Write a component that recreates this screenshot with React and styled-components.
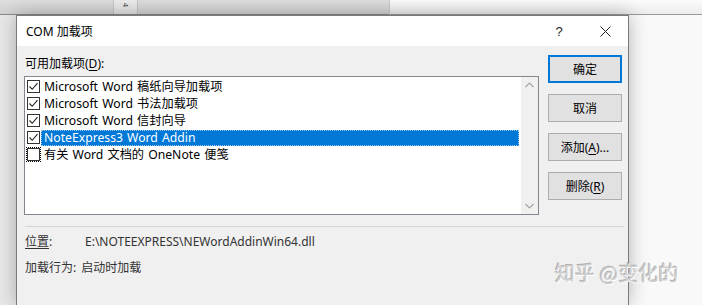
import React from 'react';
import styled, { createGlobalStyle } from 'styled-components';

const GlobalStyle = createGlobalStyle`
  html, body {
    margin: 0;
    padding: 0;
    width: 702px;
    height: 305px;
    overflow: hidden;
    background: #f9f9f9;
  }
  body {
    font-family: "Noto Sans", "Noto Sans CJK SC", sans-serif;
    font-size: 12px;
    color: #000;
  }
`;

const Page = styled.div`
  position: relative;
  width: 702px;
  height: 305px;
  display: flex;
  flex-direction: column;
  overflow: hidden;
`;

const TopStrip = styled.div`
  height: 15px;
  display: flex;
  flex-shrink: 0;
`;

const DocArea = styled.div`
  width: 389px;
  display: flex;
  padding-left: 113px;
  box-sizing: border-box;
  background: linear-gradient(#dedede, #d2d2d2);
  border-bottom: 1px solid #8a8a8a;
`;

const Ruler = styled.div`
  width: 23px;
  display: flex;
  justify-content: center;
  align-items: flex-start;
  background: linear-gradient(#ececec, #e2e2e2);
  border-left: 1px solid #c6c6c6;
  border-right: 1px solid #c6c6c6;
  font-family: "Liberation Sans", sans-serif;
  font-size: 8px;
  line-height: 8px;
  color: #444;
  span {
    transform: rotate(90deg);
    margin-top: 1px;
  }
`;

const PaneArea = styled.div`
  flex: 1;
  background: linear-gradient(#fbfbfb, #ececec);
  border-bottom: 1px solid #9a9a9a;
  border-left: 1px solid #c9c9c9;
`;

const Desk = styled.div`
  flex: 1;
  display: flex;
`;

const Gutter = styled.div`
  width: 16px;
  flex-shrink: 0;
  background: #e8e8e8;
`;

const Dialog = styled.div`
  position: relative;
  z-index: 1;
  width: 613px;
  flex-shrink: 0;
  box-sizing: border-box;
  border: 1px solid #7a7a7a;
  border-bottom: none;
  background: #f0f0f0;
  box-shadow: 0 0 18px rgba(0, 0, 0, 0.28);
  display: flex;
  flex-direction: column;
`;

const TitleBar = styled.div`
  height: 30px;
  background: #fff;
  display: flex;
  align-items: center;
  padding-left: 9px;
`;

const Title = styled.div`
  flex: 1;
  font-size: 12px;
  color: #000;
`;

const TitleButton = styled.div`
  width: 46px;
  height: 30px;
  display: flex;
  align-items: center;
  justify-content: center;
  font-family: "Liberation Sans", sans-serif;
  font-size: 13px;
  color: #222;
`;

const Body = styled.div`
  padding: 9px 6px 0 7px;
`;

const Main = styled.div`
  display: flex;
  gap: 9px;
`;

const LeftCol = styled.div`
  width: 515px;
  display: flex;
  flex-direction: column;
`;

const Label = styled.div`
  height: 18px;
  line-height: 18px;
  padding-left: 1px;
  margin-bottom: 3px;
`;

const Key = styled.span`
  text-decoration: underline;
  text-underline-offset: 2px;
`;

const ListBox = styled.div`
  height: 139px;
  box-sizing: border-box;
  border: 1px solid #828790;
  background: #fff;
  display: flex;
`;

const Items = styled.div`
  flex: 1;
  padding: 1px 2px 0 2px;
`;

const Row = styled.div`
  height: 17px;
  display: flex;
  align-items: center;
`;

const Check = styled.div`
  width: 13px;
  height: 13px;
  box-sizing: border-box;
  border: 1px solid #333;
  background: #fff;
  display: flex;
  align-items: center;
  justify-content: center;
  flex-shrink: 0;
  outline: ${p => (p.focus ? '1px dotted #000' : 'none')};
  outline-offset: 0;
`;

const ItemText = styled.div`
  flex: 1;
  height: 16px;
  line-height: 16px;
  margin-left: 1px;
  padding-left: 3px;
  white-space: nowrap;
  font-size: 12.2px;
  word-spacing: 1px;
  background: ${p => (p.selected ? '#0078d7' : 'transparent')};
  color: ${p => (p.selected ? '#fff' : '#000')};
  outline: ${p => (p.selected ? '1px dotted #9ac6ef' : 'none')};
  outline-offset: -1px;
`;

const ScrollBar = styled.div`
  width: 17px;
  background: #f0f0f0;
  display: flex;
  flex-direction: column;
  justify-content: space-between;
  align-items: center;
  padding: 5px 0;
`;

const Buttons = styled.div`
  display: flex;
  flex-direction: column;
  gap: 11px;
`;

const Button = styled.div`
  width: 74px;
  height: 28px;
  box-sizing: border-box;
  border: ${p => (p.primary ? '2px solid #0078d7' : '1px solid #adadad')};
  background: #e1e1e1;
  display: flex;
  align-items: center;
  justify-content: center;
  white-space: nowrap;
`;

const Separator = styled.div`
  height: 1px;
  width: 599px;
  margin: 11px 0 0 1px;
  background: #d5d5d5;
`;

const Info = styled.div`
  display: flex;
  flex-direction: column;
  gap: 9px;
  padding: 6px 0 0 1px;
`;

const InfoRow = styled.div`
  display: flex;
  height: 17px;
  line-height: 17px;
  white-space: nowrap;
`;

const InfoLabel = styled.div`
  width: ${p => (p.width ? `${p.width}px` : 'auto')};
  margin-right: ${p => (p.width ? '0' : '5px')};
  color: #333;
`;

const InfoValue = styled.div`
  color: #333;
`;

const RightArea = styled.div`
  flex: 1;
  background: #f9f9f9;
`;

const Watermark = styled.div`
  position: absolute;
  left: 555px;
  top: 261px;
  font-family: "Noto Sans CJK SC", sans-serif;
  font-size: 20px;
  line-height: 24px;
  color: #cfcfcf;
  z-index: 2;
  white-space: nowrap;
  text-shadow: 1px 1px 0 #fff, -1px -1px 0 #b3b3b3;
`;

const CheckMark = () => (
  <svg width="11" height="11" viewBox="0 0 11 11">
    <path d="M1.5 5.5 L4.2 8.3 L9.5 2.2" fill="none" stroke="#222" strokeWidth="1.1" />
  </svg>
);

const Chevron = ({ down }) => (
  <svg width="9" height="6" viewBox="0 0 9 6">
    <path
      d={down ? 'M0.5 1 L4.5 5 L8.5 1' : 'M0.5 5 L4.5 1 L8.5 5'}
      fill="none"
      stroke="#a6a6a6"
      strokeWidth="1.2"
    />
  </svg>
);

const CloseIcon = () => (
  <svg width="11" height="11" viewBox="0 0 11 11">
    <path d="M0.5 0.5 L10.5 10.5 M10.5 0.5 L0.5 10.5" stroke="#222" strokeWidth="1" />
  </svg>
);

const addins = [
  { name: 'Microsoft Word 稿纸向导加载项', checked: true },
  { name: 'Microsoft Word 书法加载项', checked: true },
  { name: 'Microsoft Word 信封向导', checked: true },
  { name: 'NoteExpress3 Word Addin', checked: true, selected: true },
  { name: '有关 Word 文档的 OneNote 便笺', checked: false, focus: true },
];

const App = () => {
  return (
    <>
      <GlobalStyle />
      <Page>
        <TopStrip>
          <DocArea>
            <Ruler>
              <span>4</span>
            </Ruler>
          </DocArea>
          <PaneArea />
        </TopStrip>
        <Desk>
          <Gutter />
          <Dialog>
            <TitleBar>
              <Title>COM 加载项</Title>
              <TitleButton>?</TitleButton>
              <TitleButton>
                <CloseIcon />
              </TitleButton>
            </TitleBar>
            <Body>
              <Main>
                <LeftCol>
                  <Label>
                    可用加载项(<Key>D</Key>):
                  </Label>
                  <ListBox>
                    <Items>
                      {addins.map(item => (
                        <Row key={item.name}>
                          <Check focus={item.focus}>{item.checked && <CheckMark />}</Check>
                          <ItemText selected={item.selected}>{item.name}</ItemText>
                        </Row>
                      ))}
                    </Items>
                    <ScrollBar>
                      <Chevron />
                      <Chevron down />
                    </ScrollBar>
                  </ListBox>
                </LeftCol>
                <Buttons>
                  <Button primary>确定</Button>
                  <Button>取消</Button>
                  <Button>
                    添加(<Key>A</Key>)...
                  </Button>
                  <Button>
                    删除(<Key>R</Key>)
                  </Button>
                </Buttons>
              </Main>
              <Separator />
              <Info>
                <InfoRow>
                  <InfoLabel width={60}>
                    <Key>位置</Key>:
                  </InfoLabel>
                  <InfoValue>E:\NOTEEXPRESS\NEWordAddinWin64.dll</InfoValue>
                </InfoRow>
                <InfoRow>
                  <InfoLabel>加载行为:</InfoLabel>
                  <InfoValue>启动时加载</InfoValue>
                </InfoRow>
              </Info>
            </Body>
          </Dialog>
          <RightArea />
        </Desk>
        <Watermark>知乎 @变化的</Watermark>
      </Page>
    </>
  );
};

export default App;
